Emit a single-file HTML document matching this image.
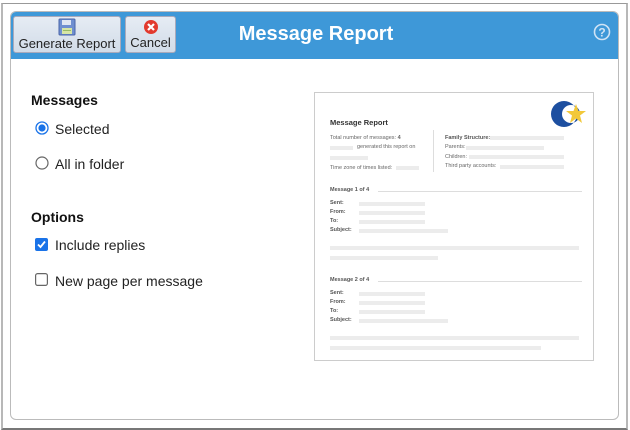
<!DOCTYPE html>
<html><head><style>
*{margin:0;padding:0;box-sizing:border-box}
body{width:630px;height:430px;background:#fff;position:relative;overflow:hidden;font-family:"Liberation Sans",sans-serif}
.a{position:absolute}
.outer{left:1px;top:3px;width:627px;height:427px;border-left:2px solid #b8b8b8;border-right:2px solid #b8b8b8;border-top:1px solid #999;border-bottom:2px solid #777}
.dlg{left:10px;top:11px;width:609px;height:409px;border:1px solid #bbb;border-radius:6px;overflow:hidden;background:#fff}
.hdr{left:0;top:0;width:609px;height:47px;background:#3e98d8}
.btn{top:4px;height:37px;border:1px solid #aab;border-radius:3px;background:linear-gradient(#e6ecf4,#d2dce8);font-size:13px;color:#222;text-align:center}
.ttl{left:205px;width:200px;text-align:center;top:11px;font-size:20px;font-weight:bold;color:#fff}
.lbl{font-size:14px;color:#222}
.h{font-size:14px;font-weight:bold;color:#111}
.pv{left:314px;top:92px;width:280px;height:269px;border:1px solid #ccc;background:#fff}
.t{font-size:5.5px;color:#666}
.b{background:#ececec;height:4px}
.k{font-size:5.5px;color:#555;font-weight:bold}
</style></head><body>
<div class="a outer"></div>
<div class="a dlg">
 <div class="a hdr">
  <div class="a btn" style="left:2px;width:108px">
   <svg width="18" height="18" viewBox="0 0 18 18" style="margin-top:1px"><rect x="1" y="1" width="16" height="16" rx="1" fill="#6f8fd0" stroke="#4a64a8"/><rect x="4" y="2" width="9" height="5" fill="#dfe6f3"/><rect x="4" y="10" width="10" height="6" fill="#d6e6a5"/><rect x="5" y="12" width="8" height="1" fill="#9b6"/></svg>
   <div style="margin-top:-3px">Generate Report</div></div>
  <div class="a btn" style="left:114px;width:51px">
   <svg width="16" height="16" viewBox="0 0 16 16" style="margin-top:2px"><circle cx="8" cy="8" r="7" fill="#e23a2e"/><path d="M5 5L11 11M11 5L5 11" stroke="#fff" stroke-width="2.2"/></svg>
   <div style="margin-top:-3px">Cancel</div></div>
  <div class="a ttl">Message Report</div>
  <svg class="a" style="left:582px;top:11px" width="18" height="18" viewBox="0 0 18 18"><circle cx="9" cy="9" r="7.5" fill="none" stroke="#cfe3f5" stroke-width="1.6"/><text x="9" y="13.5" font-size="12" font-weight="bold" fill="#cfe3f5" text-anchor="middle" font-family="Liberation Sans">?</text></svg>
 </div>
</div>
<div class="a h" style="left:31px;top:92px">Messages</div>
<svg class="a" style="left:35px;top:121px" width="14" height="14"><circle cx="7" cy="7" r="6" fill="#fff" stroke="#1a73e8" stroke-width="1.3"/><circle cx="7" cy="7" r="3.6" fill="#1a73e8"/></svg>
<div class="a lbl" style="left:55px;top:121px">Selected</div>
<svg class="a" style="left:35px;top:156px" width="14" height="14"><circle cx="7" cy="7" r="6" fill="#fff" stroke="#666" stroke-width="1.2"/></svg>
<div class="a lbl" style="left:55px;top:156px">All in folder</div>
<div class="a h" style="left:31px;top:209px">Options</div>
<svg class="a" style="left:35px;top:238px" width="13" height="13"><rect x="0" y="0" width="13" height="13" rx="2" fill="#1a73e8"/><path d="M3 6.5L5.5 9L10 3.5" stroke="#fff" stroke-width="1.8" fill="none"/></svg>
<div class="a lbl" style="left:55px;top:237px">Include replies</div>
<svg class="a" style="left:35px;top:273px" width="13" height="13"><rect x="0.6" y="0.6" width="11.8" height="11.8" rx="2" fill="#fff" stroke="#666" stroke-width="1.2"/></svg>
<div class="a lbl" style="left:55px;top:273px">New page per message</div>

<div class="a pv"></div>
<svg class="a" style="left:550px;top:100px" width="38" height="28" viewBox="0 0 38 28"><path fill-rule="evenodd" d="M14 1A13 13 0 1 0 14 27A13 13 0 1 0 14 1ZM21 5A9 9 0 1 0 21 23A9 9 0 1 0 21 5Z" fill="#1d4fa0"/><path d="M26 4L28.5 11L36 11L30 15.5L32 23L26 18.5L20 23L22 15.5L16 11L23.5 11Z" fill="#f2c83a"/></svg>
<div class="a" style="left:330px;top:118px;font-size:7.5px;font-weight:bold;color:#333">Message Report</div>
<div class="a t" style="left:330px;top:135px">Total number of messages: <b>4</b></div>
<div class="a b" style="left:330px;top:146px;width:23px"></div><div class="a t" style="left:357px;top:144px">generated this report on</div>
<div class="a b" style="left:330px;top:156px;width:38px"></div>
<div class="a t" style="left:330px;top:165px">Time zone of times listed:</div><div class="a b" style="left:396px;top:166px;width:23px"></div>
<div class="a" style="left:433px;top:130px;width:1px;height:42px;background:#ddd"></div>
<div class="a k" style="left:445px;top:135px">Family Structure:</div><div class="a b" style="left:490px;top:136px;width:74px"></div>
<div class="a t" style="left:445px;top:144px">Parents:</div><div class="a b" style="left:466px;top:146px;width:78px"></div>
<div class="a t" style="left:445px;top:154px">Children:</div><div class="a b" style="left:469px;top:155px;width:95px"></div>
<div class="a t" style="left:445px;top:163px">Third party accounts:</div><div class="a b" style="left:500px;top:165px;width:64px"></div>
<div class="a k" style="left:330px;top:187px">Message 1 of 4</div><div class="a" style="left:378px;top:191px;width:204px;height:1px;background:#ddd"></div>
<div class="a k" style="left:330px;top:200px">Sent:</div><div class="a b" style="left:359px;top:202px;width:66px"></div>
<div class="a k" style="left:330px;top:209px">From:</div><div class="a b" style="left:359px;top:211px;width:66px"></div>
<div class="a k" style="left:330px;top:218px">To:</div><div class="a b" style="left:359px;top:220px;width:66px"></div>
<div class="a k" style="left:330px;top:227px">Subject:</div><div class="a b" style="left:359px;top:229px;width:89px"></div>
<div class="a b" style="left:330px;top:246px;width:249px"></div>
<div class="a b" style="left:330px;top:256px;width:108px"></div>
<div class="a k" style="left:330px;top:277px">Message 2 of 4</div><div class="a" style="left:378px;top:281px;width:204px;height:1px;background:#ddd"></div>
<div class="a k" style="left:330px;top:290px">Sent:</div><div class="a b" style="left:359px;top:292px;width:66px"></div>
<div class="a k" style="left:330px;top:299px">From:</div><div class="a b" style="left:359px;top:301px;width:66px"></div>
<div class="a k" style="left:330px;top:308px">To:</div><div class="a b" style="left:359px;top:310px;width:66px"></div>
<div class="a k" style="left:330px;top:317px">Subject:</div><div class="a b" style="left:359px;top:319px;width:89px"></div>
<div class="a b" style="left:330px;top:336px;width:249px"></div>
<div class="a b" style="left:330px;top:346px;width:211px"></div>
</body></html>
